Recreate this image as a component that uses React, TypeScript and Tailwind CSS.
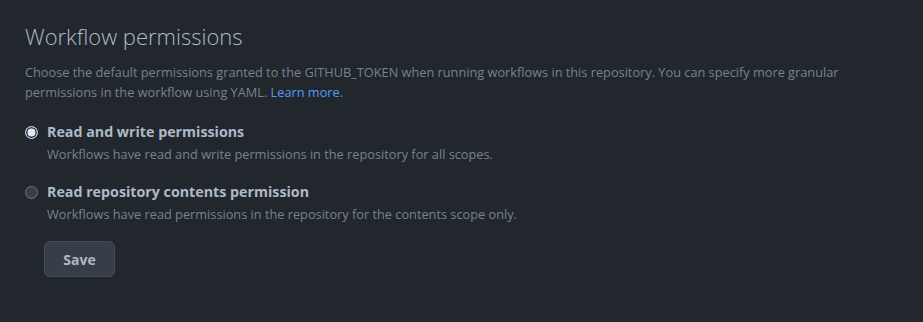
import React, { useState } from 'react';

const options = [
  {
    id: 'write',
    label: 'Read and write permissions',
    note: 'Workflows have read and write permissions in the repository for all scopes.',
  },
  {
    id: 'read',
    label: 'Read repository contents permission',
    note: 'Workflows have read permissions in the repository for the contents scope only.',
  },
];

export default function App() {
  const [value, setValue] = useState('write');

  return (
    <div
      className="w-[923px] h-[322px] bg-[#22272e] text-[#adbac7] pl-[25px] pt-[20px]"
      style={{ fontFamily: '"Open Sans", "Noto Sans", sans-serif' }}
    >
      <h2 className="text-[22px] leading-[32px] font-light text-[#adbac7]">Workflow permissions</h2>
      <p className="mt-[10px] text-[12.75px] leading-[20px] text-[#768390] max-w-[830px]">
        Choose the default permissions granted to the GITHUB_TOKEN when running workflows in this repository. You can
        specify more granular permissions in the workflow using YAML.{' '}
        <a href="#" className="text-[#539bf5]">Learn more.</a>
      </p>

      <div className="mt-[20px] flex flex-col gap-[19px]">
        {options.map((o) => (
          <label key={o.id} className="flex items-start gap-[9px] cursor-pointer">
            <span
              onClick={() => setValue(o.id)}
              className={
                value === o.id
                  ? 'mt-[4px] w-[13px] h-[13px] rounded-full bg-[#dde8f8] border border-[#c3cfdc] shadow-[inset_0_0_0_1.5px_#2d333b] shrink-0'
                  : 'mt-[4px] w-[13px] h-[13px] rounded-full bg-[#3a3f46] border border-[#6e7681] shrink-0'
              }
            />
            <span className="flex flex-col">
              <span className="text-[14.25px] leading-[20px] font-bold text-[#adbac7]">{o.label}</span>
              <span className="mt-[3px] text-[12.75px] leading-[18px] text-[#768390]">{o.note}</span>
            </span>
          </label>
        ))}
      </div>

      <button className="mt-[18px] ml-[19px] w-[71px] h-[36px] rounded-[6px] bg-[#373e47] border border-[#444c56] text-[14px] font-bold text-[#adbac7]">
        Save
      </button>
    </div>
  );
}
